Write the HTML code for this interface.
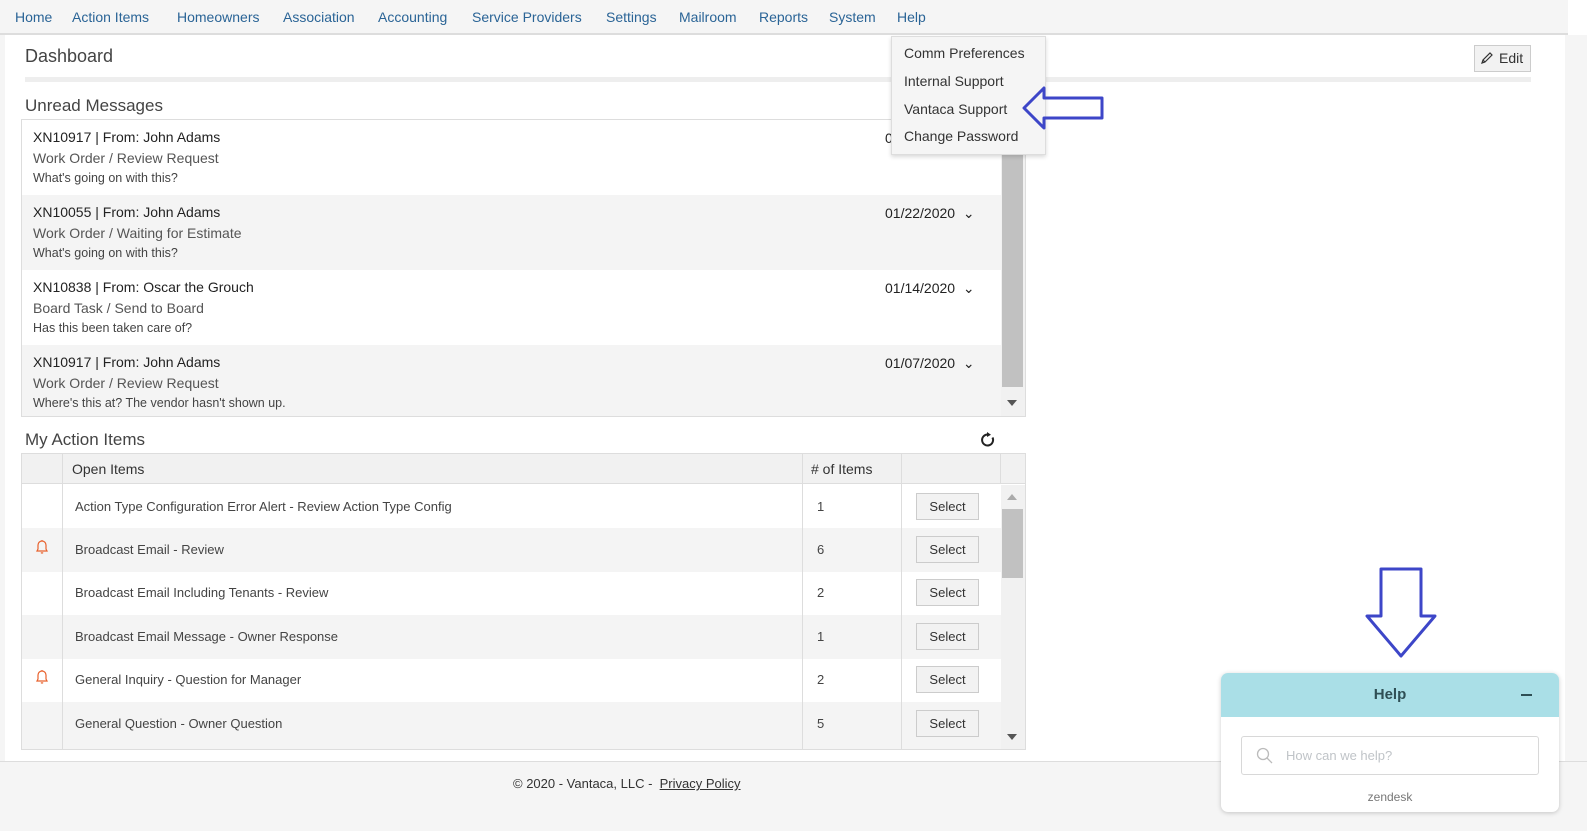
<!DOCTYPE html>
<html><head><meta charset="utf-8"><style>
*{box-sizing:border-box;margin:0;padding:0}
body{width:1587px;height:831px;position:relative;overflow:hidden;background:#fff;font-family:"Liberation Sans",sans-serif;color:#333}
.a{position:absolute}
.nav{left:0;top:0;width:1568px;height:35px;background:#f5f5f5;border-bottom:2px solid #ddd}
.nav span{position:absolute;top:9px;font-size:14px;color:#2a6496;white-space:nowrap}
.t{font-size:13px;white-space:nowrap}
.msg{left:22px;width:979px;height:75px}
.msg .h{position:absolute;left:11px;top:9px;font-size:14px;color:#222}
.msg .s{position:absolute;left:11px;top:30px;font-size:14px;color:#555}
.msg .b{position:absolute;left:11px;top:51px;font-size:12.5px;color:#444}
.msg .d{position:absolute;left:863px;top:10px;font-size:14px;color:#222}
.row{left:22px;width:979px;height:43.5px}
.row .n{position:absolute;left:53px;top:14px;font-size:13px;color:#444}
.row .c{position:absolute;left:795px;top:14px;font-size:13px;color:#444}
.btn{position:absolute;left:894px;top:8px;width:63px;height:27px;border:1px solid #ccc;background:#f2f2f2;font-size:13px;text-align:center;line-height:25px;color:#333}
.bell{position:absolute;left:13px;top:11px}
</style></head><body>
<div class="a" style="left:0;top:35px;width:5px;height:727px;background:#f5f5f5"></div>
<div class="a" style="left:1565px;top:35px;width:22px;height:727px;background:#f5f5f5"></div>
<div class="a nav">
<span style="left:15px">Home</span><span style="left:72px">Action Items</span><span style="left:177px">Homeowners</span><span style="left:283px">Association</span><span style="left:378px">Accounting</span><span style="left:472px">Service Providers</span><span style="left:606px">Settings</span><span style="left:679px">Mailroom</span><span style="left:759px">Reports</span><span style="left:829px">System</span><span style="left:897px">Help</span>
</div>
<div class="a" style="left:25px;top:46px;font-size:18px;color:#444">Dashboard</div>
<div class="a" style="left:25px;top:77px;width:1506px;height:5px;background:#eee"></div>
<div class="a" style="left:1474px;top:45px;width:57px;height:27px;border:1px solid #ccc;background:#f2f2f2;font-size:14px;line-height:25px;padding-left:24px">Edit</div>
<svg class="a" style="left:1480px;top:51px" width="14" height="14" viewBox="0 0 14 14"><path d="M2 12 L3 9 L10 2 L12 4 L5 11 Z M3 9 L5 11" fill="none" stroke="#333" stroke-width="1.2"/></svg>
<div class="a" style="left:25px;top:96px;font-size:17px;color:#444">Unread Messages</div>
<div class="a" style="left:21px;top:119px;width:1005px;height:298px;border:1px solid #ddd"></div>
<div class="a msg" style="top:120px;background:#fff"><div class="h">XN10917 | From: John Adams</div><div class="s">Work Order / Review Request</div><div class="b">What's going on with this?</div><div class="d">01/29/2020 &#8964;</div></div>
<div class="a msg" style="top:195px;background:#f4f4f4"><div class="h">XN10055 | From: John Adams</div><div class="s">Work Order / Waiting for Estimate</div><div class="b">What's going on with this?</div><div class="d">01/22/2020 &nbsp;&#8964;</div></div>
<div class="a msg" style="top:270px;background:#fff"><div class="h">XN10838 | From: Oscar the Grouch</div><div class="s">Board Task / Send to Board</div><div class="b">Has this been taken care of?</div><div class="d">01/14/2020 &nbsp;&#8964;</div></div>
<div class="a msg" style="top:345px;height:71px;background:#f4f4f4"><div class="h">XN10917 | From: John Adams</div><div class="s">Work Order / Review Request</div><div class="b">Where's this at? The vendor hasn't shown up.</div><div class="d">01/07/2020 &nbsp;&#8964;</div></div>
<div class="a" style="left:1001px;top:120px;width:24px;height:296px;background:#f1f1f1"></div>
<div class="a" style="left:1002px;top:125px;width:21px;height:262px;background:#c1c1c1"></div>
<div class="a" style="left:1007px;top:400px;border-left:5px solid transparent;border-right:5px solid transparent;border-top:6px solid #555"></div>
<div class="a" style="left:25px;top:430px;font-size:17px;color:#444">My Action Items</div>
<svg class="a" style="left:980px;top:432px" width="16" height="16" viewBox="0 0 16 16"><path d="M12.5 5.5 A5.5 5.5 0 1 1 8 2.5" fill="none" stroke="#222" stroke-width="2"/><path d="M7 0 L11 2.7 L7 5 Z" fill="#222"/></svg>
<div class="a" style="left:21px;top:453px;width:1005px;height:297px;border:1px solid #ddd"></div>
<div class="a" style="left:22px;top:454px;width:1003px;height:30px;background:#f1f1f1;border-bottom:1px solid #ddd"></div>
<div class="a t" style="left:72px;top:461px;font-size:14px">Open Items</div>
<div class="a t" style="left:811px;top:461px;font-size:14px"># of Items</div>
<div class="a" style="left:62px;top:454px;width:1px;height:295px;background:#ddd"></div>
<div class="a" style="left:802px;top:454px;width:1px;height:295px;background:#ddd"></div>
<div class="a" style="left:901px;top:454px;width:1px;height:295px;background:#ddd"></div>
<div class="a" style="left:1000px;top:454px;width:1px;height:30px;background:#ddd"></div>
<div class="a row" style="top:485px"><div class="n">Action Type Configuration Error Alert - Review Action Type Config</div><div class="c">1</div><div class="btn">Select</div></div>
<div class="a row" style="top:528px;background:#f4f4f4"><svg class="bell" width="14" height="16" viewBox="0 0 14 16"><path d="M2 12 L3 10 L3 6 A4 4 0 0 1 11 6 L11 10 L12 12 Z M6 13.5 A1.2 1.2 0 0 0 8 13.5 M7 1 L7 2" fill="none" stroke="#e8612c" stroke-width="1.2"/></svg><div class="n">Broadcast Email - Review</div><div class="c">6</div><div class="btn">Select</div></div>
<div class="a row" style="top:571px"><div class="n">Broadcast Email Including Tenants - Review</div><div class="c">2</div><div class="btn">Select</div></div>
<div class="a row" style="top:615px;background:#f4f4f4"><div class="n">Broadcast Email Message - Owner Response</div><div class="c">1</div><div class="btn">Select</div></div>
<div class="a row" style="top:658px"><svg class="bell" width="14" height="16" viewBox="0 0 14 16"><path d="M2 12 L3 10 L3 6 A4 4 0 0 1 11 6 L11 10 L12 12 Z M6 13.5 A1.2 1.2 0 0 0 8 13.5 M7 1 L7 2" fill="none" stroke="#e8612c" stroke-width="1.2"/></svg><div class="n">General Inquiry - Question for Manager</div><div class="c">2</div><div class="btn">Select</div></div>
<div class="a row" style="top:702px;height:47px;background:#f4f4f4"><div class="n">General Question - Owner Question</div><div class="c">5</div><div class="btn">Select</div></div>
<div class="a" style="left:62px;top:485px;width:1px;height:264px;background:#ddd"></div>
<div class="a" style="left:802px;top:485px;width:1px;height:264px;background:#ddd"></div>
<div class="a" style="left:901px;top:485px;width:1px;height:264px;background:#ddd"></div>
<div class="a" style="left:1001px;top:485px;width:24px;height:264px;background:#f1f1f1"></div>
<div class="a" style="left:1002px;top:509px;width:21px;height:69px;background:#c1c1c1"></div>
<div class="a" style="left:1007px;top:494px;border-left:5px solid transparent;border-right:5px solid transparent;border-bottom:6px solid #aaa"></div>
<div class="a" style="left:1007px;top:734px;border-left:5px solid transparent;border-right:5px solid transparent;border-top:6px solid #555"></div>
<div class="a" style="left:0;top:761px;width:1587px;height:70px;background:#f5f5f5;border-top:1px solid #ddd"></div>
<div class="a t" style="left:513px;top:776px;color:#333">© 2020 - Vantaca, LLC - &nbsp;<u>Privacy Policy</u></div>
<div class="a" style="left:891px;top:36px;width:155px;height:119px;background:#f5f5f5;border:1px solid #ddd;box-shadow:0 2px 4px rgba(0,0,0,.15)"></div>
<div class="a t" style="left:904px;top:45px;font-size:14px">Comm Preferences</div>
<div class="a t" style="left:904px;top:73px;font-size:14px">Internal Support</div>
<div class="a t" style="left:904px;top:101px;font-size:14px">Vantaca Support</div>
<div class="a t" style="left:904px;top:128px;font-size:14px">Change Password</div>
<svg class="a" style="left:1020px;top:85px" width="86" height="46" viewBox="0 0 86 46"><path d="M4 23 L24 3 L24 13 L82 13 L82 33 L24 33 L24 43 Z" fill="none" stroke="#3d46c8" stroke-width="3" stroke-linejoin="round"/></svg>
<svg class="a" style="left:1363px;top:566px" width="76" height="94" viewBox="0 0 76 94"><path d="M38 90 L4 50 L18 50 L18 3 L58 3 L58 50 L72 50 Z" fill="none" stroke="#3d46c8" stroke-width="3" stroke-linejoin="round"/></svg>
<div class="a" style="left:1221px;top:673px;width:338px;height:139px;background:#fff;border-radius:7px;box-shadow:0 1px 5px rgba(0,0,0,.2);overflow:hidden">
<div style="height:44px;background:#aadfe7;text-align:center;font-size:15px;font-weight:bold;line-height:44px;color:#2f4f55">Help</div>
<div class="a" style="left:300px;top:21px;width:11px;height:2px;background:#2f4f55"></div>
<div class="a" style="left:20px;top:63px;width:298px;height:39px;border:1px solid #d8d8d8;border-radius:3px"></div>
<svg class="a" style="left:35px;top:74px" width="18" height="18" viewBox="0 0 18 18"><circle cx="7" cy="7" r="5.5" fill="none" stroke="#bbb" stroke-width="1.3"/><path d="M11 11 L16 16" stroke="#bbb" stroke-width="1.3"/></svg>
<div class="a" style="left:65px;top:75px;font-size:13px;color:#c0c4c8">How can we help?</div>
<div class="a" style="left:0;width:338px;top:117px;text-align:center;font-size:12px;color:#777">zendesk</div>
</div>
</body></html>
